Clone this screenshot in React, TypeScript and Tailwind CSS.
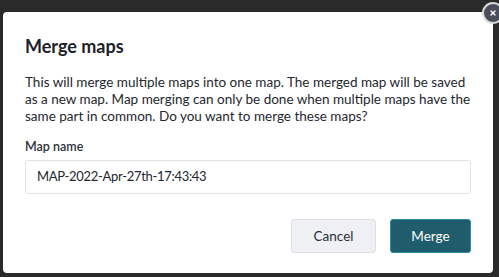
import { X } from "lucide-react";

export default function App() {
  return (
    <div
      className="relative h-[277px] w-[499px] overflow-hidden bg-[#2a2a2b] pl-[3px] pt-[12px]"
      style={{ fontFamily: "Lato, 'Open Sans', sans-serif" }}
    >
      <div className="flex h-[261px] w-[490px] flex-col rounded-[4px] bg-white px-[22px] pt-[23px] text-[#1d2129]">
        <h2 className="text-[18px] font-bold leading-[22px]">Merge maps</h2>

        <p className="mt-[17px] text-[13.5px] leading-[17px] text-[#23272e]">
          This will merge multiple maps into one map. The merged map will be saved as a new map. Map merging can only be
          done when multiple maps have the same part in common. Do you want to merge these maps?
        </p>

        <label className="mt-[14px] text-[12.5px] font-semibold leading-[16px] text-[#2c3038]">Map name</label>
        <div className="mt-[5px] flex h-[34px] w-[446px] items-center rounded-[3px] border border-[#dfe1e8] px-[11px] text-[13px] tracking-[-0.3px] text-[#23272e]">
          MAP-2022-Apr-27th-17:43:43
        </div>

        <div className="mt-[25px] flex justify-end gap-[14px]">
          <button className="h-[34px] w-[85px] rounded-[3px] border border-[#dcdee4] bg-[#eff0f4] text-[13.5px] text-[#2a2e36]">
            Cancel
          </button>
          <button className="h-[34px] w-[81px] rounded-[3px] border border-[#2b8ea8] bg-[#1f5c6c] text-[13.5px] text-white">
            Merge
          </button>
        </div>
      </div>

      <div className="absolute left-[482px] top-[2px] flex h-[22px] w-[22px] items-center justify-center rounded-full border-2 border-[#d9dadd] bg-[#4a4e5a]">
        <X className="h-[8px] w-[8px] text-white" strokeWidth={4} />
      </div>
    </div>
  );
}
